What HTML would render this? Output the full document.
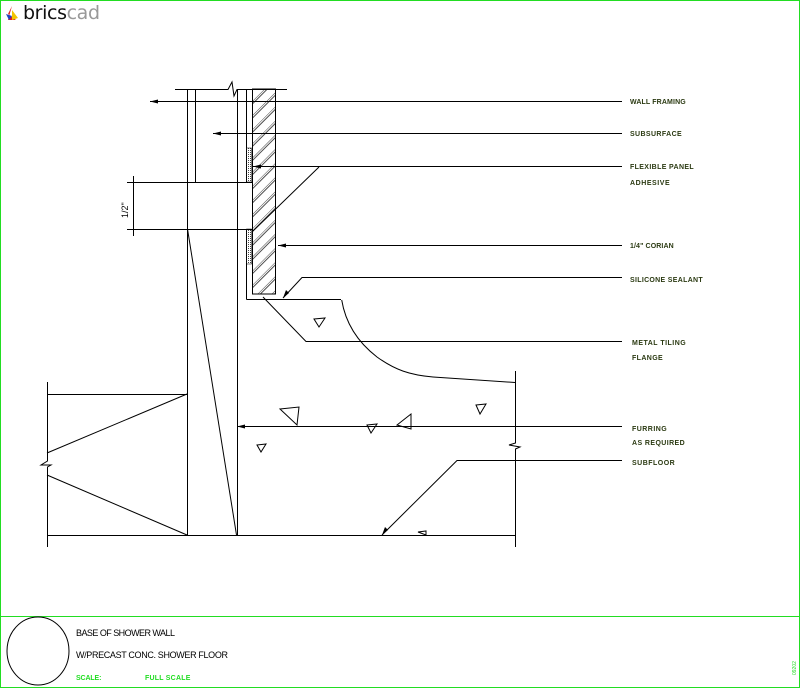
<!DOCTYPE html>
<html><head><meta charset="utf-8"><style>
body{margin:0;background:#fff}
svg{display:block}
.l{font-family:"Liberation Sans",sans-serif;font-size:7px;font-weight:bold;fill:#2b3a12;letter-spacing:0.3px}
.t{font-family:"Liberation Sans",sans-serif;font-size:9px;fill:#000}
.g{font-family:"Liberation Sans",sans-serif;font-size:7px;font-weight:bold;fill:#22dd22;letter-spacing:0.6px}
</style></head><body>
<svg width="800" height="688" viewBox="0 0 800 688" xmlns="http://www.w3.org/2000/svg">
<defs>
<pattern id="h" width="10" height="10" patternUnits="userSpaceOnUse" patternTransform="rotate(45)"><line x1="0" y1="0" x2="0" y2="10" stroke="#000" stroke-width="0.7"/><line x1="2" y1="0" x2="2" y2="10" stroke="#000" stroke-width="0.7"/></pattern>
<pattern id="x" width="2" height="2" patternUnits="userSpaceOnUse"><rect width="1" height="1" fill="#444"/></pattern>
</defs>
<rect x="0.5" y="0.5" width="799" height="687" fill="none" stroke="#22dd22"/>
<line x1="0" y1="616.5" x2="800" y2="616.5" stroke="#22dd22"/>
<g transform="translate(4,6)"><polygon points="8,0 4,8 12,14 4,14" fill="#e02020"/><polygon points="8,4 14,12 8,14" fill="#f2c400"/><polygon points="2,8 8,10 5,14" fill="#2040c0"/></g>
<text x="23" y="19" font-family="DejaVu Sans,sans-serif" font-size="19" fill="#111" textLength="77">brics<tspan fill="#999">cad</tspan></text>
<g stroke="#000" stroke-width="1" fill="none">
<polyline points="175,89.5 228,89.5 232,82 234,96 237,89.5 287,89.5"/>
<line x1="187.5" y1="89" x2="187.5" y2="535"/>
<line x1="195.5" y1="89" x2="195.5" y2="182"/>
<line x1="237.5" y1="89" x2="237.5" y2="535"/>
<line x1="246.5" y1="89" x2="246.5" y2="182"/>
<line x1="246.5" y1="229" x2="246.5" y2="299.5"/>
<line x1="246.5" y1="299.5" x2="341" y2="299.5"/>
<rect x="252.5" y="89" width="23" height="205" fill="url(#h)"/>
<rect x="246.5" y="148" width="5" height="34" fill="url(#x)" stroke-width="0.5"/>
<rect x="246.5" y="229" width="5" height="35" fill="url(#x)" stroke-width="0.5"/>
<line x1="127" y1="182.5" x2="252" y2="182.5"/>
<line x1="127" y1="229.5" x2="252" y2="229.5"/>
<line x1="133.5" y1="176" x2="133.5" y2="236"/>
<line x1="187.5" y1="229" x2="236.5" y2="535"/>
<path d="M341.7,300 C345,320 355,340 377,357 C395,370 410,375 433,377 L515,382.5"/>
<polyline points="515.5,371 515.5,443 509,445 520,447 515.5,449 515.5,547"/>
<line x1="47" y1="535.5" x2="515" y2="535.5"/>
<polyline points="47.5,382 47.5,461 41,465 51,465 47.5,467 47.5,547"/>
<line x1="47" y1="394.5" x2="187" y2="394.5"/>
<line x1="47" y1="453" x2="187" y2="394"/>
<line x1="47" y1="475" x2="187" y2="535"/>
<line x1="150" y1="101.5" x2="622" y2="101.5"/>
<line x1="213" y1="133.5" x2="622" y2="133.5"/>
<line x1="253" y1="166.5" x2="622" y2="166.5"/>
<line x1="319" y1="167" x2="252" y2="232"/>
<line x1="278" y1="245.5" x2="622" y2="245.5"/>
<polyline points="622,277.5 302,277.5 283,298"/>
<polyline points="622,341.5 306,341.5 263,297"/>
<line x1="237" y1="426.5" x2="622" y2="426.5"/>
<polyline points="622,460.5 457,460.5 382,535"/>
<polygon points="314,319 325,318 319,327"/>
<polygon points="280,409 299,407 297,425"/>
<polygon points="367,425 377,424 371,433"/>
<polygon points="397,425 411,414 411,429"/>
<polygon points="476,405 486,404 480,414"/>
<polygon points="257,445 266,444 261,452"/>
<polygon points="418,532 426,531 426,535"/>
<ellipse cx="38" cy="651" rx="31" ry="34"/>
</g>
<g fill="#000">
<polygon points="150,101.5 158,99.5 158,103.5"/>
<polygon points="213,133.5 221,131.5 221,135.5"/>
<polygon points="253,166.5 261,164.5 261,168.5"/>
<polygon points="278,245.5 286,243.5 286,247.5"/>
<polygon points="237,426.5 245,424.5 245,428.5"/>
<polygon points="283,298 286,290 289,293"/>
<polygon points="382,535 385,527 388,530"/>
</g>
<text class="t" transform="translate(128,218) rotate(-90)" font-size="8" fill="#2b3a12">1/2"</text>
<text class="l" x="630" y="104" textLength="56">WALL FRAMING</text>
<text class="l" x="630" y="136" textLength="52">SUBSURFACE</text>
<text class="l" x="630" y="169" textLength="64">FLEXIBLE PANEL</text>
<text class="l" x="630" y="185" textLength="40">ADHESIVE</text>
<text class="l" x="630" y="248" textLength="44">1/4" CORIAN</text>
<text class="l" x="630" y="282" textLength="73">SILICONE SEALANT</text>
<text class="l" x="632" y="345" textLength="54">METAL TILING</text>
<text class="l" x="632" y="360" textLength="31">FLANGE</text>
<text class="l" x="632" y="431" textLength="35">FURRING</text>
<text class="l" x="632" y="445" textLength="53">AS REQUIRED</text>
<text class="l" x="632" y="465" textLength="43">SUBFLOOR</text>
<text class="t" x="76" y="636" textLength="99">BASE OF SHOWER WALL</text>
<text class="t" x="76" y="658" textLength="152">W/PRECAST CONC. SHOWER FLOOR</text>
<text class="g" x="76" y="680" textLength="26">SCALE:</text>
<text class="g" x="145" y="680" textLength="46">FULL SCALE</text>
<text transform="translate(796,675) rotate(-90)" font-family="Liberation Sans,sans-serif" font-size="5" fill="#22dd22">09202</text>
</svg>
</body></html>
